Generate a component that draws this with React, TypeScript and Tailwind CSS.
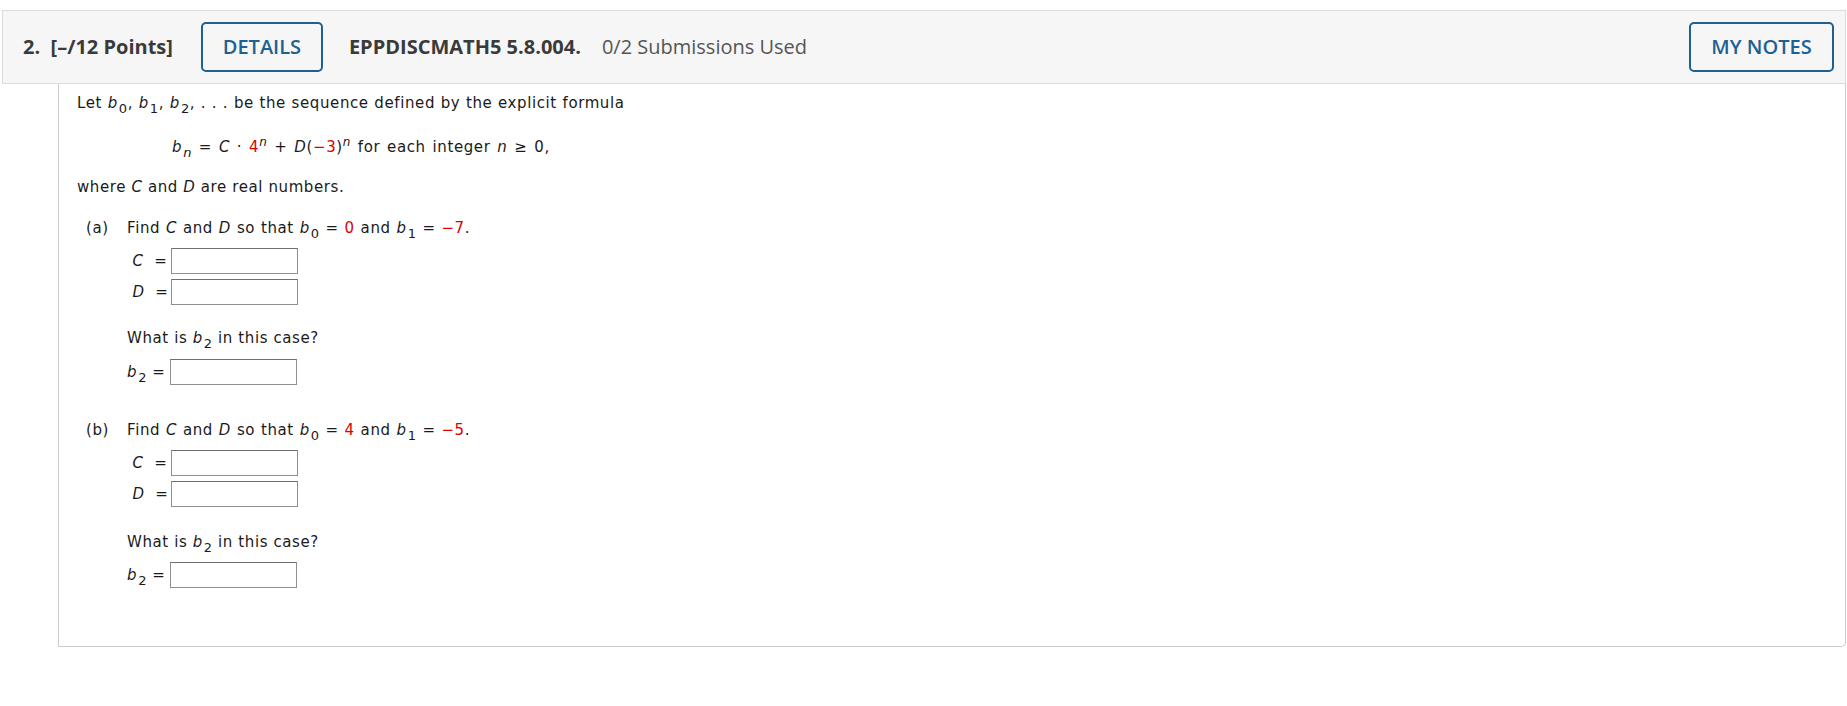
import React from "react";

const Sub = ({ children }: { children: React.ReactNode }) => (
  <span className="relative top-[5px] text-[13px] leading-none not-italic ml-[1px]">{children}</span>
);
const Sup = ({ children }: { children: React.ReactNode }) => (
  <span className="relative -top-[6px] text-[12px] leading-none italic">{children}</span>
);
const V = ({ children }: { children: React.ReactNode }) => <i className="italic">{children}</i>;
const R = ({ children }: { children: React.ReactNode }) => <span className="text-[#e00000]">{children}</span>;

const Box = () => <div className="w-[127px] h-[26px] border border-[#8f8f8f] border-t-[#6f6f6f] bg-white" />;

const Field = ({ label, mt }: { label: React.ReactNode; mt: string }) => (
  <div className={`flex items-center ${mt}`}>
    <div className="w-[44px] flex items-center">{label}</div>
    <Box />
  </div>
);

const Part = ({ tag, b0, b1, first }: { tag: string; b0: string; b1: string; first: boolean }) => (
  <div className={first ? "mt-[21px]" : "mt-[35px]"}>
    <div className="flex leading-[20px]">
      <div className="w-[50px] pl-[9px]">({tag})</div>
      <div className="[word-spacing:0.5px]">
        Find <V>C</V> and <V>D</V> so that <V>b</V>
        <Sub>0</Sub> = <R>{b0}</R> and <V>b</V>
        <Sub>1</Sub> = <R>{b1}</R>.
      </div>
    </div>
    <div className="pl-[50px]">
      <Field
        mt="mt-[10px]"
        label={
          <span>
            &nbsp;<V>C</V>&nbsp;&nbsp;=
          </span>
        }
      />
      <Field
        mt="mt-[5px]"
        label={
          <span>
            &nbsp;<V>D</V>&nbsp;&nbsp;=
          </span>
        }
      />
      <div className={`leading-[20px] ${first ? "mt-[23px]" : "mt-[25px]"}`}>
        What is <V>b</V>
        <Sub>2</Sub> in this case?
      </div>
      <div className={`flex items-center ${first ? "mt-[11px]" : "mt-[10px]"}`}>
        <div className="w-[43px]">
          <V>b</V>
          <Sub>2</Sub> =
        </div>
        <Box />
      </div>
    </div>
  </div>
);

export default function App() {
  return (
    <div className="bg-white min-h-[706px] pt-[10px] pl-[2px] pr-[1px]">
      <div
        className="h-[74px] bg-[#f6f6f6] border border-[#dcdcdc] flex items-center pl-[20px] pr-[11px] text-[#333]"
        style={{ fontFamily: '"Open Sans", sans-serif' }}
      >
        <div className="text-[20px] font-bold text-[#3a3a3a] whitespace-pre">2.  [–/12 Points]</div>
        <div className="ml-[28px] w-[122px] h-[50px] border-2 border-[#1c6194] rounded-[5px] flex items-center justify-center text-[20px] font-semibold text-[#1c6194]">
          DETAILS
        </div>
        <div className="ml-[26px] text-[20px] font-bold text-[#3a3a3a]">EPPDISCMATH5 5.8.004.</div>
        <div className="ml-[21px] text-[20px] text-[#555]">0/2 Submissions Used</div>
        <div className="ml-auto w-[145px] h-[50px] border-2 border-[#1c6194] rounded-[5px] flex items-center justify-center text-[20px] font-semibold text-[#1c6194]">
          MY NOTES
        </div>
      </div>
      <div
        className="ml-[56px] border-l border-r border-b border-[#cccccc] rounded-br-[5px] pt-[9px] pl-[18px] pb-[58px] text-[15px] tracking-[0.6px] text-[#1a1a1a]"
        style={{ fontFamily: '"DejaVu Sans", Verdana, sans-serif' }}
      >
        <div className="leading-[20px] [word-spacing:0.3px]">
          Let <V>b</V>
          <Sub>0</Sub>, <V>b</V>
          <Sub>1</Sub>, <V>b</V>
          <Sub>2</Sub>, . . . be the sequence defined by the explicit formula
        </div>
        <div className="leading-[20px] mt-[24px] pl-[95px] [word-spacing:1.5px]">
          <V>b</V>
          <Sub>
            <i>n</i>
          </Sub>{" "}
          = <V>C</V> · <R>4</R>
          <Sup>n</Sup> + <V>D</V>(<R>−3</R>)<Sup>n</Sup> for each integer <V>n</V> ≥ 0,
        </div>
        <div className="leading-[20px] mt-[20px]">
          where <V>C</V> and <V>D</V> are real numbers.
        </div>
        <Part tag="a" b0="0" b1="−7" first={true} />
        <Part tag="b" b0="4" b1="−5" first={false} />
      </div>
    </div>
  );
}
